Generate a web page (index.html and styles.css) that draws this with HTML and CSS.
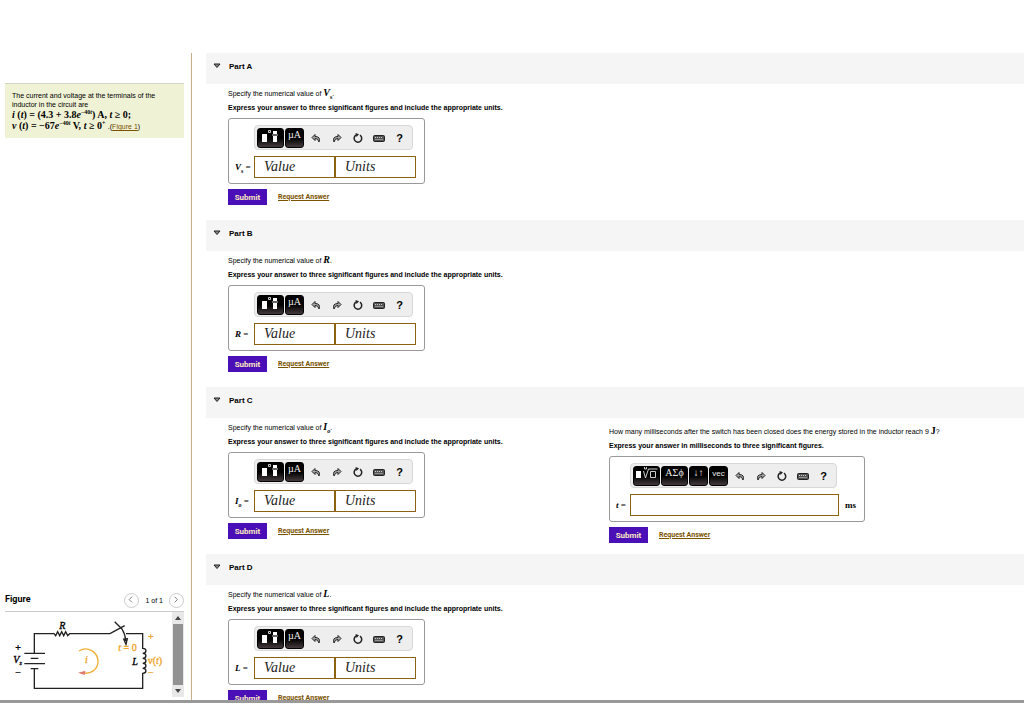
FILE: index.html
```
<!DOCTYPE html>
<html lang="en">
<head>
<meta charset="UTF-8">
<meta name="viewport" content="width=device-width, initial-scale=1.0">
<title>Inductor Problem</title>
<link rel="stylesheet" href="styles.css">
</head>
<body>
<div class="page">
  <aside class="sidebar">
    <div class="problem">
      <p>The current and voltage at the terminals of the inductor in the circuit are</p>
      <p class="equation"><i>i</i> (<i>t</i>) = (4.3 + 3.8<i>e</i><sup>−40<i>t</i></sup>) A, <i>t</i> ≥ 0;</p>
      <p class="equation"><i>v</i> (<i>t</i>) = −67<i>e</i><sup>−40<i>t</i></sup> V, <i>t</i> ≥ 0<sup>+</sup> <span class="figure-link">.(<a href="#figure">Figure 1</a>)</span></p>
    </div>

    <div class="figure" id="figure">
      <div class="figure-header">
        <h2>Figure</h2>
        <div class="pager">
          <button class="round" aria-label="Previous"><svg viewBox="0 0 14 14"><path d="M7.500 3L4.500 6l3 3"/></svg></button>
          <span>1 of 1</span>
          <button class="round" aria-label="Next"><svg viewBox="0 0 14 14"><path d="M5 3L8 6l-3 3"/></svg></button>
        </div>
      </div>
      <div class="figure-view">
        <svg class="circuit" viewBox="15 81 495 255">
          <!-- wires -->
          <g class="wire">
            <path d="M103 205V146H162l5 6 6-12 6 12 6-12 6 12 6-12 6 12 6-6H330L374 122"/>
            <path d="M344 110L366 132Q376 148 377 168M371 162l7 16 4-17z"/>
            <path d="M378 146H428V190c13 0 13 15 0 15c13 0 13 15 0 15c13 0 13 15 0 15c13 0 13 15 0 15c13 0 13 15 0 15V310H103V251"/>
            <path d="M73 205H135M92 220H115M73 236H135M92 251H115"/>
          </g>
          <!-- mesh current -->
          <path class="loop" d="M237 198C262 182 294 200 294 229C294 255 272 268 248 264"/>
          <path class="loop-head" d="M234 263l22-6-2 13z"/>
          <g class="label">
            <text x="178" y="132" class="it">R</text>
            <text x="46" y="198">+</text>
            <text x="40" y="234" class="it">V<tspan dy="7" class="small">s</tspan></text>
            <text x="46" y="273">−</text>
            <text x="397" y="241" class="it">L</text>
          </g>
          <g class="label orange">
            <text x="355" y="197"><tspan class="it">t</tspan> = 0</text>
            <text x="255" y="234" class="it">i</text>
            <text x="444" y="166">+</text>
            <text x="443" y="237">v(<tspan class="it">t</tspan>)</text>
            <text x="444" y="274">−</text>
          </g>
        </svg>
        <div class="scrollbar">
          <svg viewBox="0 0 12 12"><path d="M3 8l3-4 3 4z"/></svg>
          <div class="thumb"></div>
          <svg viewBox="0 0 12 12"><path d="M3 4l3 4 3-4z"/></svg>
        </div>
      </div>
    </div>
  </aside>

  <main class="parts" id="parts"></main>
</div>

<script>
  var icons = {
    undo: '<svg viewBox="0 0 12 12"><path d="M5 2.500L2 5.500L5 8.500V6.500Q8 6 9 10Q11 4.500 5 4.500Z"/></svg>',
    redo: '<svg viewBox="0 0 12 12"><path d="M7 2.500L10 5.500L7 8.500V6.500Q4 6 3 10Q1 4.500 7 4.500Z"/></svg>',
    reset: '<svg viewBox="0 0 12 12"><path class="ring" d="M4.200 3A3.800 3.800 0 1 0 8 3.200"/><path class="solid" d="M3.500 1L7 2.200L4.500 5z"/></svg>',
    keyboard: '<svg viewBox="0 0 12 12"><rect class="keys" x="0.500" y="3.500" width="11" height="6" rx="1"/><path class="dots" d="M2 5.500h8M2.500 7.500h7"/></svg>',
    help: '<span>?</span>'
  };

  var template = '<svg viewBox="0 0 25 18"><path class="box" d="M4 5h5v8H4zM15 2h4v3h-4zM15 7h4v6h-4z"/><path class="thin" d="M10.500 1.500h2v2h-2zM14 6h6"/></svg>';
  var root = '<svg viewBox="0 0 25 18"><path class="box" d="M2 4h5v7H2z"/><path class="thin" d="M9.500 4l2 7 3-9h9M16.500 4.500h5v6h-5zM10.500 0v2h2V0"/></svg>';
  var unitKeys = [['w27', template, 'Templates'], ['w19', 'µA', 'Units']];
  var mathKeys = [['w27', root, 'Templates'], ['w27', 'ΑΣϕ', 'Greek'], ['w19', '↓↑', 'Arrows'], ['w19', '<b>vec</b>', 'Vector']];

  var express = 'Express your answer to three significant figures and include the appropriate units.';
  var parts = [
    { name: 'A', symbol: '<i>V</i><sub>s</sub>' },
    { name: 'B', symbol: '<i>R</i>' },
    { name: 'C', symbol: '<i>I<sub>o</sub></i>' },
    { name: 'D', symbol: '<i>L</i>' }
  ];

  function toolbar(keys) {
    var html = '<div class="toolbar">';
    keys.forEach(function(k) {
      html += `<button class="key ${k[0]}" aria-label="${k[2]}">${k[1]}</button>`;
    });
    html += '<div class="tools">';
    Object.keys(icons).forEach(function(name) {
      html += `<button class="tool" aria-label="${name}">${icons[name]}</button>`;
    });
    return html + '</div></div>';
  }

  var actions = '<div class="actions"><button class="submit">Submit</button><a href="#request">Request Answer</a></div>';

  function unitQuestion(p) {
    return `<div class="question">
      <p>Specify the numerical value of <span class="math">${p.symbol}</span>.</p>
      <p class="bold">${express}</p>
      <div class="answer">
        ${toolbar(unitKeys)}
        <label class="math" for="value${p.name}">${p.symbol} =</label>
        <div class="fields">
          <input type="text" id="value${p.name}" placeholder="Value">
          <input type="text" placeholder="Units" aria-label="Units">
        </div>
      </div>
      ${actions}
    </div>`;
  }

  var energyQuestion = `<div class="question energy">
      <p>How many milliseconds after the switch has been closed does the energy stored in the inductor reach 9 <span class="math">J</span>?</p>
      <p class="bold">Express your answer in milliseconds to three significant figures.</p>
      <div class="answer">
        ${toolbar(mathKeys)}
        <label class="math" for="time"><i>t</i> =</label>
        <div class="fields"><input type="text" id="time"></div>
        <span class="math unit">ms</span>
      </div>
      ${actions}
    </div>`;

  document.getElementById('parts').innerHTML = parts.map(function(p) {
    return `<section class="part">
      <h3><svg viewBox="0 0 8 8"><path d="M1 2h6L4 5.500z"/></svg>Part ${p.name}</h3>
      <div class="part-body">${unitQuestion(p)}${p.name === 'C' ? energyQuestion : ''}</div>
    </section>`;
  }).join('');
</script>
</body>
</html>
```
FILE: styles.css
```
* {
  box-sizing: border-box;
}
body {
  margin: 0;
  height: 100vh;
  padding: 53px 0 3px;
  overflow: hidden;
  background: #fff;
  color: #000;
  font-family: "Liberation Sans", Arial, sans-serif;
  font-size: 7px;
  line-height: 9px;
}
p, h2, h3 {
  margin: 0;
}
button {
  font-family: inherit;
  padding: 0;
  border: none;
  cursor: pointer;
}
a {
  color: #7a5200;
}
.page {
  display: flex;
  height: 100%;
  overflow: hidden;
  border-bottom: 3px solid #999;
}

/* Left column */
.sidebar {
  flex: 0 0 192px;
  display: flex;
  flex-direction: column;
  justify-content: space-between;
  padding: 30px 7px 3px 5px;
  border-right: 1px solid #c9ad8c;
}
.problem {
  height: 55px;
  padding: 7px;
  background: #f0f2d5;
  border-top: 1px solid #d5d7c4;
}
.equation, .math {
  font-family: "Liberation Serif", "Times New Roman", serif;
  font-weight: bold;
  font-size: 10px;
}
.equation {
  line-height: 11px;
  white-space: nowrap;
}
sup, sub {
  font-size: 6px;
  line-height: 0;
}
.figure-link {
  font-family: "Liberation Sans", Arial, sans-serif;
  font-weight: normal;
  font-size: 7px;
}
.figure-header {
  display: flex;
  justify-content: space-between;
  height: 22px;
  border-bottom: 1px solid #ccc;
}
.figure-header h2 {
  font-family: Roboto, sans-serif;
  font-size: 9px;
  line-height: 18px;
}
.pager {
  display: flex;
  align-items: center;
  gap: 6px;
  font-size: 7px;
}
.round {
  width: 15px;
  height: 15px;
  border: 1px solid #ccc;
  border-radius: 50%;
  background: #fff;
}
.round svg {
  display: block;
  fill: none;
  stroke: #777;
}
.figure-view {
  display: flex;
  justify-content: space-between;
}
.circuit {
  width: 165px;
  height: 85px;
}
.wire {
  fill: none;
  stroke: #222;
  stroke-width: 4;
}
.loop {
  fill: none;
  stroke: #f0ae38;
  stroke-width: 4;
}
.loop-head {
  fill: #e07a70;
}
.label {
  font-family: "Liberation Serif", serif;
  font-size: 30px;
  stroke: #000;
}
.orange {
  fill: #efa528;
  stroke: #efa528;
}
.it {
  font-style: italic;
}
.small {
  font-size: 18px;
}
.scrollbar {
  display: flex;
  flex-direction: column;
  width: 12px;
  background: #e8e8e8;
}
.scrollbar svg {
  height: 12px;
  fill: #444;
}
.thumb {
  flex: 1;
  margin: 0 1px;
  background: #929292;
}

/* Parts */
.parts {
  flex: 1;
  padding-left: 14px;
}
.part h3 {
  display: flex;
  align-items: center;
  gap: 8px;
  height: 31px;
  padding: 0 7px 5px;
  background: #f5f5f5;
  font-size: 8px;
}
.part h3 svg {
  width: 8px;
  height: 8px;
  fill: #888;
  stroke: #222;
}
.part-body {
  display: flex;
  height: 136px;
  padding-left: 22px;
}
.question {
  flex: 0 0 381px;
  padding-top: 3px;
}
.question p {
  height: 14px;
  line-height: 14px;
  white-space: nowrap;
}
.question p .math {
  line-height: 0;
}
.question .bold {
  font-weight: bold;
}
.energy {
  padding-top: 7px;
}
.answer {
  display: inline-grid;
  grid-template-columns: 19px auto auto;
  align-items: center;
  row-gap: 6px;
  height: 66px;
  margin-top: 3px;
  padding: 6px 8px 5px 6px;
  border: 1px solid #999;
  border-radius: 3px;
}
.energy .answer {
  grid-template-columns: 14px auto auto;
}
.answer label {
  grid-column: 1;
  font-size: 9px;
  white-space: nowrap;
}
.toolbar {
  grid-column: 2;
  display: flex;
  align-items: center;
  gap: 1px;
  justify-self: start;
  height: 25px;
  padding: 0 2px;
  border: 1px solid #d8d8d8;
  border-radius: 4px;
  background: #eee;
}
.key {
  height: 20px;
  padding-bottom: 5px;
  border: 1px solid #000;
  border-radius: 3px;
  background: linear-gradient(#000 50%, #443a3c);
  color: #eee;
  font-family: "Liberation Serif", serif;
  font-size: 10px;
  line-height: 12px;
}
.key b {
  font-family: "Liberation Sans", Arial, sans-serif;
  font-size: 8px;
  font-weight: normal;
}
.key svg {
  display: block;
  width: 25px;
  height: 18px;
}
.key:has(svg) {
  padding: 0;
}
.w27 {
  width: 27px;
}
.w19 {
  width: 19px;
}
.box {
  fill: #fff;
}
.thin {
  fill: none;
  stroke: #ccc;
}
.tools {
  display: flex;
}
.tool {
  display: flex;
  align-items: center;
  justify-content: center;
  width: 21px;
  height: 20px;
  background: none;
  font-size: 11px;
  font-weight: bold;
}
.tool svg {
  width: 12px;
  height: 12px;
  fill: #aaa;
  stroke: #222;
}
.tool .ring {
  fill: none;
  stroke-width: 1.5;
}
.tool .solid {
  fill: #222;
  stroke: none;
}
.tool .keys {
  fill: #555;
}
.tool .dots {
  stroke: #ccc;
  stroke-dasharray: 1 1;
}
.fields {
  display: flex;
}
.fields input {
  width: 81px;
  height: 22px;
  padding: 0 9px;
  border: 1px solid #8c6210;
  background: #fff;
  font: italic 14px "Liberation Serif", serif;
}
.energy .fields input {
  width: 209px;
}
.fields input::placeholder {
  color: #222;
}
.answer .unit {
  margin-left: 6px;
  font-size: 9px;
}
.actions {
  display: flex;
  align-items: center;
  gap: 11px;
  margin-top: 5px;
  font-family: Roboto, sans-serif;
  font-weight: bold;
}
.submit {
  width: 39px;
  height: 16px;
  background: #4b0fb8;
  color: #fbe9c0;
  font-size: 8px;
  font-weight: bold;
}
```
